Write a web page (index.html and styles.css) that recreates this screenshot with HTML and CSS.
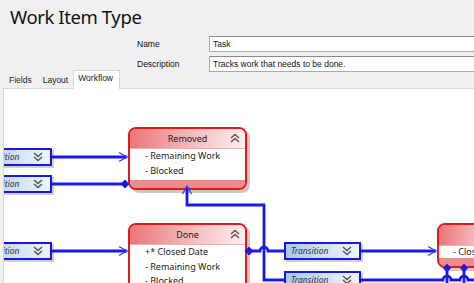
FILE: index.html
```html
<!DOCTYPE html>
<html lang="en">
<head>
	<meta charset="UTF-8">
	<title>Work Item Type</title>
	<link rel="stylesheet" href="styles.css">
</head>
<body>
	<div class="top">
		<h1 class="title">Work Item Type</h1>
		<div class="fields">
			<span class="label">Name</span>
			<div class="input">Task</div>
			<span class="label">Description</span>
			<div class="input">Tracks work that needs to be done.</div>
		</div>
	</div>

	<div class="tabs">
		<span class="tab">Fields</span>
		<span class="tab">Layout</span>
		<span class="tab selected">Workflow</span>
	</div>

	<div class="panel">
		<div class="canvas">
			<!-- transitions coming in from the left, clipped by the panel -->
			<div class="transition" style="left:-29px; top:59px;"><span>Transition</span><svg class="chev" viewBox="0 0 10 10"><path d="M1 1 L5 4.5 L9 1 M1 5 L5 8.5 L9 5"/></svg></div>
			<div class="transition" style="left:-29px; top:86px;"><span>Transition</span><svg class="chev" viewBox="0 0 10 10"><path d="M1 1 L5 4.5 L9 1 M1 5 L5 8.5 L9 5"/></svg></div>
			<div class="transition" style="left:-29px; top:153px;"><span>Transition</span><svg class="chev" viewBox="0 0 10 10"><path d="M1 1 L5 4.5 L9 1 M1 5 L5 8.5 L9 5"/></svg></div>
			<div class="transition" style="left:280px; top:153px;"><span>Transition</span><svg class="chev" viewBox="0 0 10 10"><path d="M1 1 L5 4.5 L9 1 M1 5 L5 8.5 L9 5"/></svg></div>
			<div class="transition" style="left:280px; top:182px;"><span>Transition</span><svg class="chev" viewBox="0 0 10 10"><path d="M1 1 L5 4.5 L9 1 M1 5 L5 8.5 L9 5"/></svg></div>

			<div class="state" style="left:124px; top:38px;">
				<div class="state-head">Removed<svg class="chev" viewBox="0 0 10 10"><path d="M1 5 L5 1.5 L9 5 M1 9 L5 5.5 L9 9"/></svg></div>
				<ul class="state-body">
					<li>- Remaining Work</li>
					<li>- Blocked</li>
				</ul>
				<div class="state-foot"></div>
			</div>

			<div class="state" style="left:124px; top:134px;">
				<div class="state-head">Done<svg class="chev" viewBox="0 0 10 10"><path d="M1 5 L5 1.5 L9 5 M1 9 L5 5.5 L9 9"/></svg></div>
				<ul class="state-body">
					<li>+* Closed Date</li>
					<li>- Remaining Work</li>
					<li>- Blocked</li>
				</ul>
				<div class="state-foot"></div>
			</div>

			<div class="state small" style="left:433px; top:134px;">
				<div class="state-head">Closed</div>
				<ul class="state-body">
					<li>- Closed Date</li>
				</ul>
				<div class="state-foot"></div>
			</div>

			<svg class="wires" width="470" height="194" viewBox="0 0 470 194">
				<g class="line">
					<path d="M48 68 H123"/>
					<path d="M48 95 H119"/>
					<path d="M48 162 H123"/>
					<path d="M183 98 V116 H260 V191 H280"/>
					<path d="M244 162 H256 A4 4 0 0 1 264 162 H280"/>
					<path d="M357 162 H432"/>
					<path d="M357 191 H439 A4 4 0 0 1 447 191 H456 A4 4 0 0 1 464 191 H480"/>
					<path d="M443 178 V200"/>
					<path d="M460 178 V200"/>
				</g>
				<g class="arrow">
					<path d="M115 63.5 L123 68 L115 72.5"/>
					<path d="M115 157.5 L123 162 L115 166.5"/>
					<path d="M424 157.5 L432 162 L424 166.5"/>
					<path d="M178.5 105 L183 97 L187.5 105"/>
				</g>
				<g class="diamond">
					<path d="M116.5 95 L121 90.5 L125.5 95 L121 99.5 Z"/>
					<path d="M240.5 162 L245 157.5 L249.5 162 L245 166.5 Z"/>
					<path d="M443 174.5 L447 179 L443 183.5 L439 179 Z"/>
					<path d="M460 174.5 L464 179 L460 183.5 L456 179 Z"/>
				</g>
			</svg>
		</div>
	</div>
</body>
</html>
```

FILE: styles.css
```css
body {
	margin: 0;
	height: 283px;
	overflow: hidden;
	background: #f0f0f0;
	font-family: "Liberation Sans", Arial, sans-serif;
	font-size: 8.5px;
	color: #111;
}

.top { height: 72px; }

.title {
	margin: 0;
	padding: 5px 0 0 10px;
	height: 31px;
	font-family: "Noto Sans", "Open Sans", sans-serif;
	font-weight: normal;
	font-size: 18.5px;
	letter-spacing: -0.4px;
	line-height: 24px;
	color: #111;
}

.fields {
	display: grid;
	grid-template-columns: 72px 1fr;
	grid-auto-rows: 16px;
	row-gap: 4px;
	padding-left: 137px;
}

.label { line-height: 16px; }

.input {
	background: #fff;
	border: 1px solid #a9a9a9;
	border-top-color: #8a8a8a;
	border-right: none;
	padding-left: 3px;
	line-height: 14px;
	white-space: nowrap;
}

.tabs {
	display: flex;
	align-items: flex-end;
	height: 16px;
	padding-left: 3px;
}

.tab {
	padding: 0 5px 0 6px;
	line-height: 15px;
	color: #222;
}

.tab.selected {
	position: relative;
	z-index: 1;
	background: #fff;
	border: 1px solid #d5d5d5;
	border-bottom: none;
	line-height: 14px;
	height: 18px;
	margin-bottom: -1px;
	padding: 0 6px 0 4px;
}

.panel {
	margin-left: 3px;
	background: #fff;
	border-top: 1px solid #d5d5d5;
	border-left: 1px solid #d5d5d5;
	height: 194px;
}

.canvas {
	position: relative;
	height: 194px;
	overflow: hidden;
	font-family: "Noto Sans", "Open Sans", sans-serif;
	font-size: 9px;
	color: #222;
}

/* states */
.state {
	position: absolute;
	width: 115px;
	background: #fff;
	border: 2px solid #e31818;
	border-radius: 8px;
	box-shadow: 3px 3px 0 #c9c9c9;
	overflow: hidden;
}

.state-head {
	position: relative;
	height: 19px;
	line-height: 19px;
	text-align: center;
	background: linear-gradient(to right, #ec7679, #f7c3c4 60%, #fdeeee);
	border-bottom: 1px solid #eab2b2;
}

.state-head .chev {
	position: absolute;
	right: 5px;
	top: 4px;
	width: 10px;
	height: 10px;
}

.state-body {
	list-style: none;
	margin: 0;
	padding: 0 0 2px 15px;
	line-height: 14.5px;
}

.state-foot {
	height: 8px;
	background: #f08a8b;
}

.state.small { width: 70px; }
.state.small .state-head { height: 20px; color: transparent; }
.state.small .state-body { padding-left: 14px; line-height: 11px; height: 10px; }

/* transitions */
.transition {
	position: absolute;
	width: 73px;
	height: 14px;
	border: 2px solid #1717e0;
	background: linear-gradient(to right, #a9c8ea, #dce9f7 70%, #eef4fb);
	box-shadow: 2px 2px 0 #cfcfcf;
	font-style: italic;
	font-size: 8.5px;
	line-height: 14px;
	color: #333;
}

.transition span { padding-left: 5px; }

.transition .chev {
	position: absolute;
	right: 7px;
	top: 2px;
	width: 10px;
	height: 10px;
}

.chev path {
	fill: none;
	stroke: #555;
	stroke-width: 1.4;
}

/* connectors */
.wires {
	position: absolute;
	left: 0;
	top: 0;
	overflow: visible;
}

.line path {
	fill: none;
	stroke: #1a1ae6;
	stroke-width: 2.8;
}

.arrow path {
	fill: none;
	stroke: #3a3aee;
	stroke-width: 1.3;
}

.diamond path { fill: #1a1ae6; }
```
